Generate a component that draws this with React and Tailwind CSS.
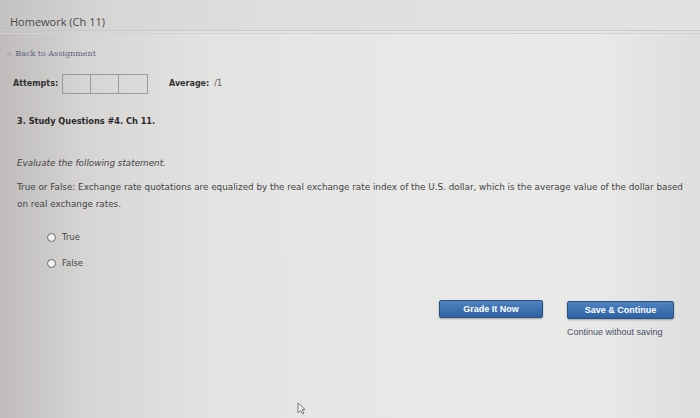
export default function App() {
  const verdana = { fontFamily: '"DejaVu Sans", Verdana, sans-serif' };
  return (
    <div className="relative w-[700px] h-[418px] overflow-hidden bg-[linear-gradient(to_right,#bfbcbb_0%,#d6d5d4_12%,#e3e3e2_30%,#e8e8e7_60%,#e9e9e8_85%,#dedede_100%)]">
      <div className="h-[31px] flex items-center pl-[10px] pt-[15px] border-b border-[#c9c9c9] bg-[linear-gradient(to_right,#c4c2c1_0%,#d6d6d5_15%,#dfdfde_40%,#e2e2e1_100%)]">
        <span className="text-[11px] text-[#4a4a4a]" style={{ fontFamily: '"Open Sans", sans-serif' }}>Homework (Ch 11)</span>
      </div>
      <div className="h-[3px] border-b border-[#d2d2d2]"></div>
      <div className="pl-[6px] pt-[15px] leading-[10px] text-[8px] text-[#5d6385]" style={{ fontFamily: '"DejaVu Serif", "Liberation Serif", serif' }}>
        <span className="text-[#9a9aaa]">&lt;</span> Back to Assignment
      </div>
      <div className="flex items-center pl-[13px] pt-[15px]" style={verdana}>
        <span className="text-[8px] font-bold text-[#333] w-[49px]">Attempts:</span>
        <div className="flex border border-[#9a9a9a]">
          <div className="w-[28px] h-[18px] border-r border-[#9a9a9a]"></div>
          <div className="w-[28px] h-[18px] border-r border-[#9a9a9a]"></div>
          <div className="w-[28px] h-[18px]"></div>
        </div>
        <span className="ml-[21px] text-[8px] font-bold text-[#333]">Average:</span>
        <span className="ml-[5px] text-[8px] text-[#555]">/1</span>
      </div>
      <div className="pl-[17px] pt-[21px] text-[8.2px] font-bold text-[#2a2a2a]" style={verdana}>
        3. Study Questions #4. Ch 11.
      </div>
      <div className="pl-[17px] pr-[10px] pt-[30px] text-[8.8px] text-[#444]" style={verdana}>
        <div className="italic leading-[12px]">Evaluate the following statement.</div>
        <div className="mt-[10px] leading-[17px]">
          True or False: Exchange rate quotations are equalized by the real exchange rate index of the U.S. dollar, which is the average value of the dollar based on real exchange rates.
        </div>
        <div className="pl-[30px] pt-[18px] flex flex-col gap-[14px] text-[8.4px]">
          <label className="flex items-center gap-[6px] leading-[12px]">
            <span className="w-[9px] h-[9px] rounded-full border-[1.5px] border-[#666] bg-[#f2f2f2]"></span>
            <span>True</span>
          </label>
          <label className="flex items-center gap-[6px] leading-[12px]">
            <span className="w-[9px] h-[9px] rounded-full border-[1.5px] border-[#666] bg-[#f2f2f2]"></span>
            <span>False</span>
          </label>
        </div>
      </div>
      <div className="flex pl-[439px] pt-[31px] gap-[24px]" style={{ fontFamily: '"Liberation Sans", Arial, sans-serif' }}>
        <button className="w-[104px] h-[18px] rounded-[2px] border border-[#2b4f80] bg-[linear-gradient(#4f82bf,#2f62a3)] text-white text-[9px] font-bold shadow-[0_1px_2px_rgba(0,0,0,0.3)]">Grade It Now</button>
        <div className="flex flex-col pt-[1px]">
          <button className="w-[107px] h-[18px] rounded-[2px] border border-[#2b4f80] bg-[linear-gradient(#4f82bf,#2f62a3)] text-white text-[9px] font-bold shadow-[0_1px_2px_rgba(0,0,0,0.3)]">Save &amp; Continue</button>
          <span className="mt-[8px] text-[9px] leading-[10px] text-[#4a5068]">Continue without saving</span>
        </div>
      </div>
      <svg className="absolute left-[297px] top-[402px]" width="9" height="13" viewBox="0 0 9 13">
        <path d="M1 1 L1 11 L3.5 8.5 L5.5 12 L7 11.2 L5 7.8 L8 7.5 Z" fill="#f4f4f4" stroke="#777" strokeWidth="1" />
      </svg>
    </div>
  );
}
